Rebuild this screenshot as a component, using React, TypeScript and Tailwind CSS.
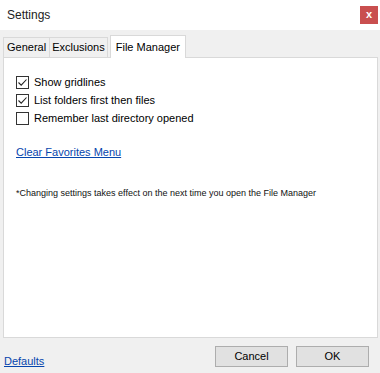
export default function App() {
  const font = { fontFamily: '"Liberation Sans", Arial, sans-serif' };
  return (
    <div className="w-[380px] h-[373px] bg-[#f0f0f0] flex flex-col text-black overflow-hidden" style={font}>
      {/* title bar */}
      <div className="h-[30px] bg-white flex items-center justify-between pl-[7px] pr-[2px] shrink-0">
        <span className="text-[12px] text-[#222]">Settings</span>
        <button className="w-[18px] h-[18px] bg-[#c94f4f] text-white text-[11px] font-bold leading-none flex items-center justify-center mb-[1px]">
          x
        </button>
      </div>

      {/* tabs */}
      <div className="flex items-end pl-[3px] h-[27px] shrink-0">
        <div className="h-[20px] px-[3px] border border-b-0 border-[#d9d9d9] bg-[#f0f0f0] text-[11px] flex items-center">General</div>
        <div className="h-[20px] px-[2px] border border-b-0 border-l-0 border-[#d9d9d9] bg-[#f0f0f0] text-[11px] flex items-center">Exclusions</div>
        <div className="h-[23px] px-[5px] border border-b-0 border-[#d9d9d9] bg-white text-[11px] flex items-center -mb-px relative z-10 ml-[2px]">File Manager</div>
      </div>

      {/* panel */}
      <div className="mx-[3px] mr-[2px] h-[281px] bg-white border border-[#d9d9d9] flex flex-col pl-[12px] pt-[18px]">
        <div className="flex flex-col gap-[6px] text-[11px]">
          {[
            ["Show gridlines", true],
            ["List folders first then files", true],
            ["Remember last directory opened", false],
          ].map(([label, checked]) => (
            <label key={label as string} className="flex items-center gap-[5px] h-[12px]">
              <span className="w-[13px] h-[13px] border border-[#333] bg-white flex items-center justify-center">
                {checked && (
                  <svg width="11" height="11" viewBox="0 0 11 11">
                    <path d="M1.5 5.5 L4.2 8.2 L9.5 2.5" fill="none" stroke="#222" strokeWidth="1.1" />
                  </svg>
                )}
              </span>
              <span>{label}</span>
            </label>
          ))}
        </div>
        <a className="mt-[20px] text-[11px] text-[#0645ad] underline w-fit">Clear Favorites Menu</a>
        <p className="mt-[26px] text-[9px] text-[#111]">
          *Changing settings takes effect on the next time you open the File Manager
        </p>
      </div>

      {/* footer */}
      <div className="flex items-center justify-between pl-[4px] pr-[11px] flex-1">
        <a className="text-[11px] text-[#0645ad] underline mt-[12px]">Defaults</a>
        <div className="flex gap-[8px] mt-[2px]">
          <button className="w-[73px] h-[21px] bg-[#e1e1e1] border border-[#adadad] text-[11px]">Cancel</button>
          <button className="w-[73px] h-[21px] bg-[#e1e1e1] border border-[#adadad] text-[11px]">OK</button>
        </div>
      </div>
    </div>
  );
}
